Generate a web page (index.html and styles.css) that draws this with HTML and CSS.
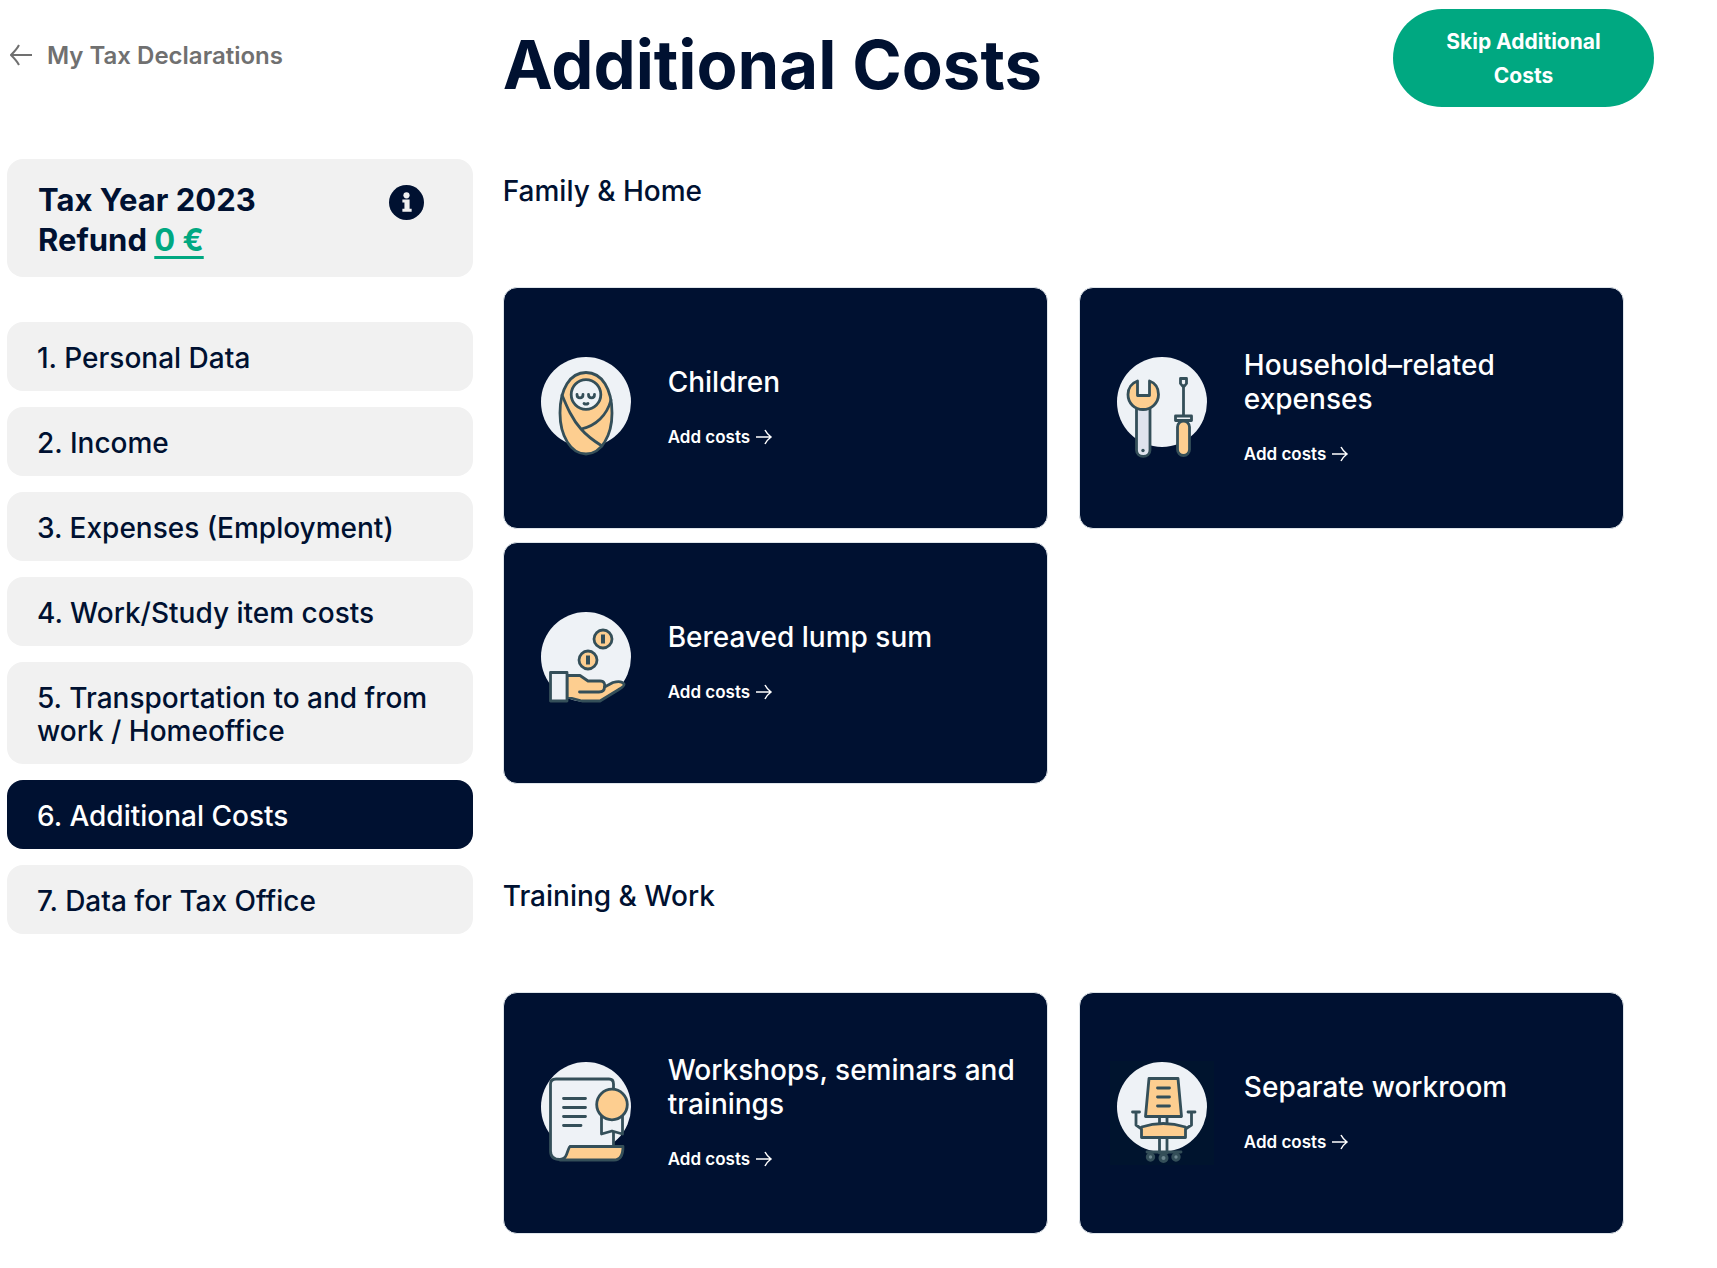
FILE: index.html
```html
<!DOCTYPE html>
<html lang="en">

<head>
    <meta charset="UTF-8">
    <meta name="viewport" content="width=device-width, initial-scale=1.0">
    <title>Additional Costs</title>
    <link rel="stylesheet" href="styles.css">
</head>

<body>
    <div class="page">
        <!-- Sidebar -->
        <aside class="sidebar">
            <a class="back-link" href="#">
                <svg class="back-arrow" viewBox="0 0 22 22" aria-hidden="true">
                    <path d="M22 11H1M9 1C7 5 4 8 1 11C4 14 7 17 9 21" />
                </svg>
                My Tax Declarations
            </a>
            <div class="refund-box">
                <p class="refund-text">Tax Year 2023<br>Refund <a class="refund-amount" href="#">0 €</a></p>
                <button class="info-button" type="button" aria-label="Refund information">
                    <svg viewBox="0 0 34 34" aria-hidden="true">
                        <circle cx="17" cy="17" r="17" fill="#001131" />
                        <circle cx="17" cy="10" r="3" fill="#f1f1f1" />
                        <path d="M13 14h7v9h2v3h-9v-3h2v-6h-2z" fill="#f1f1f1" />
                    </svg>
                </button>
            </div>
            <nav class="steps">
                <a class="step" href="#">1. Personal Data</a>
                <a class="step" href="#">2. Income</a>
                <a class="step" href="#">3. Expenses (Employment)</a>
                <a class="step" href="#">4. Work/Study item costs</a>
                <a class="step" href="#">5. Transportation to and from work / Homeoffice</a>
                <a class="step active" href="#">6. Additional Costs</a>
                <a class="step" href="#">7. Data for Tax Office</a>
            </nav>
        </aside>

        <!-- Content -->
        <main class="content">
            <header class="content-header">
                <h1>Additional Costs</h1>
                <button class="skip-button" type="button">Skip Additional Costs</button>
            </header>

            <section class="category">
                <h2>Family &amp; Home</h2>
                <div class="cards">
                    <a class="card" href="#">
                        <svg class="card-icon" viewBox="0 0 104 104" aria-hidden="true">
                            <circle class="disc" cx="52" cy="46" r="45" />
                            <path class="line peach" d="M52 16.500C68 16.500 78 33 78 57C78 80 67 98 52 98S26 80 26 57C26 33 36 16.500 52 16.500Z" />
                            <circle class="line pale" cx="52" cy="38.500" r="14.800" />
                            <path class="line" d="M28 39C33 51 38 63 47 73C53 80 60 85 68 90M77 44C73 59 62 70 47 73" />
                            <path class="line" d="M43 38.500C43 43 49 43 49 38.500M54.500 38.500C54.500 43 60.500 43 60.500 38.500M50 47.500Q52 48.800 54 47.500" />
                        </svg>
                        <div class="card-body">
                            <h3>Children</h3>
                            <span class="add-costs">Add costs
                                <svg class="arrow" viewBox="0 0 16 16" aria-hidden="true"><path d="M0 8H15M9 1Q11 5 15 8Q11 11 9 15" /></svg>
                            </span>
                        </div>
                    </a>
                    <a class="card" href="#">
                        <svg class="card-icon" viewBox="0 0 104 104" aria-hidden="true">
                            <circle class="disc" cx="52" cy="46" r="45" />
                            <!-- wrench -->
                            <path class="line metal" d="M26.500 52H40V94C40 102.500 26.500 102.500 26.500 94Z" />
                            <path class="line peach" d="M27.500 25V39.500H39.500V25C45 27 48.500 32 48.500 38.500C48.500 47 41.500 53.500 33 53.500S18 47 18 38.500C18 32 22 27 27.500 25Z" />
                            <circle class="dark" cx="33" cy="94.500" r="1.700" />
                            <!-- screwdriver -->
                            <path class="line pale" d="M70.500 22.500H76.500V27.500L74.500 30H72.500L70.500 27.500Z" />
                            <path class="line" d="M73.500 30V60" />
                            <rect class="line peach" x="67.500" y="65" width="12" height="34.500" rx="6" />
                            <rect class="line pale" x="65.500" y="60" width="16" height="4.500" />
                        </svg>
                        <div class="card-body">
                            <h3>Household–related expenses</h3>
                            <span class="add-costs">Add costs
                                <svg class="arrow" viewBox="0 0 16 16" aria-hidden="true"><path d="M0 8H15M9 1Q11 5 15 8Q11 11 9 15" /></svg>
                            </span>
                        </div>
                    </a>
                    <a class="card" href="#">
                        <svg class="card-icon" viewBox="0 0 104 104" aria-hidden="true">
                            <circle class="disc" cx="52" cy="46" r="45" />
                            <circle class="line peach" cx="69" cy="28" r="9" />
                            <path class="bar" d="M69 23.500V32.500" />
                            <circle class="line peach" cx="54" cy="49" r="9" />
                            <path class="bar" d="M54 44.500V53.500" />
                            <path class="line peach" d="M33 64.500H46L54 70H66C71 70 71 74 70.500 76L79 71.500C84 70 88 70 90 73C91 75 87 77 84 79L66 90H48L33 86Z" />
                            <path class="line" d="M45.500 81H65C69 81 70.500 79 70.500 76" />
                            <rect class="line pale" x="16.500" y="61.500" width="16.500" height="28.500" />
                        </svg>
                        <div class="card-body">
                            <h3>Bereaved lump sum</h3>
                            <span class="add-costs">Add costs
                                <svg class="arrow" viewBox="0 0 16 16" aria-hidden="true"><path d="M0 8H15M9 1Q11 5 15 8Q11 11 9 15" /></svg>
                            </span>
                        </div>
                    </a>
                </div>
            </section>

            <section class="category">
                <h2>Training &amp; Work</h2>
                <div class="cards">
                    <a class="card" href="#">
                        <svg class="card-icon" viewBox="0 0 104 104" aria-hidden="true">
                            <circle class="disc" cx="52" cy="46" r="45" />
                            <path class="line pale" d="M22 18H75Q79.500 18 79.500 23V86H36C34 90 35 98 26 98.500Q16.500 98.500 16.500 90V23Q16.500 18 22 18Z" />
                            <path class="line peach" d="M36 85.500H89Q89 99 80 99H26C34 98 33 88 36 85.500Z" />
                            <path class="line" d="M29.500 37.500H51.500M29.500 46.500H51.500M29.500 55.500H51.500M29.500 64.500H47" />
                            <path class="line pale" d="M67.500 50V73L78 70L88.500 73V50Z" />
                            <circle class="line peach" cx="78" cy="43.500" r="15.300" />
                        </svg>
                        <div class="card-body">
                            <h3>Workshops, seminars and trainings</h3>
                            <span class="add-costs">Add costs
                                <svg class="arrow" viewBox="0 0 16 16" aria-hidden="true"><path d="M0 8H15M9 1Q11 5 15 8Q11 11 9 15" /></svg>
                            </span>
                        </div>
                    </a>
                    <a class="card" href="#">
                        <svg class="card-icon" viewBox="0 0 104 104" aria-hidden="true">
                            <rect class="shade" width="104" height="104" />
                            <circle class="disc" cx="52" cy="46" r="45" />
                            <path class="line pale" d="M49.500 54H57V92H49.500Z" />
                            <path class="line peach" d="M39 17.500H68L71.500 55.500H35.500Z" />
                            <path class="line" d="M47.500 27H59.500M47.500 36H59.500M47.500 45H59.500" />
                            <path class="line" d="M22.500 51H29.500M26 51V64L33 69M78 51H85M81.500 51V64L74 69" />
                            <path class="line peach" d="M31.500 66Q53 59 75.500 66V76.500H31.500Z" />
                            <path class="line" d="M37 91H71" />
                            <circle class="wheel" cx="40.500" cy="96" r="3.200" />
                            <circle class="wheel" cx="53.500" cy="97" r="3.500" />
                            <circle class="wheel" cx="66" cy="96" r="3.200" />
                        </svg>
                        <div class="card-body">
                            <h3>Separate workroom</h3>
                            <span class="add-costs">Add costs
                                <svg class="arrow" viewBox="0 0 16 16" aria-hidden="true"><path d="M0 8H15M9 1Q11 5 15 8Q11 11 9 15" /></svg>
                            </span>
                        </div>
                    </a>
                </div>
            </section>
        </main>
    </div>
</body>

</html>
```
FILE: styles.css
```css
* {
    box-sizing: border-box;
}

body {
    font-family: Inter, "Liberation Sans", sans-serif;
    color: #001131;
    background-color: #fff;
    margin: 0;
}

h1,
h2,
h3,
p {
    margin: 0;
}

a {
    color: inherit;
    text-decoration: none;
}

button {
    font-family: inherit;
    border: none;
    cursor: pointer;
}

.page {
    display: grid;
    grid-template-columns: minmax(0, 144fr) minmax(0, 356fr);
    column-gap: 30px;
    padding: 9px 63px 32px 7px;
}

/* Sidebar */
.back-link {
    display: flex;
    align-items: center;
    gap: 15px;
    height: 92px;
    padding-left: 3px;
    color: #707070;
    font-size: 24px;
    font-weight: 600;
}

.back-arrow {
    width: 22px;
    height: 22px;
    fill: none;
    stroke: #707070;
    stroke-width: 2;
}

.refund-box {
    display: flex;
    justify-content: space-between;
    align-items: flex-start;
    margin: 58px 0 45px;
    padding: 21px 49px 17px 31px;
    background-color: #f1f1f1;
    border-radius: 16px;
}

.refund-text {
    font-size: 31px;
    font-weight: 700;
    line-height: 40px;
}

.refund-amount {
    color: #00a881;
    text-decoration: underline;
    text-decoration-thickness: 3px;
    text-underline-offset: 5px;
}

.info-button {
    width: 35px;
    height: 35px;
    margin-top: 5px;
    padding: 0;
    background: none;
}

.steps {
    display: flex;
    flex-direction: column;
    gap: 16px;
}

.step {
    padding: 20px 30px 16px;
    background-color: #f1f1f1;
    border-radius: 16px;
    font-size: 28px;
    font-weight: 500;
    line-height: 33px;
}

.step.active {
    background-color: #001131;
    color: #fff;
}

/* Content */
.content-header {
    display: flex;
    justify-content: space-between;
    align-items: center;
    height: 98px;
}

h1 {
    font-size: 67px;
    line-height: 80px;
    padding-top: 14px;
}

.skip-button {
    width: 261px;
    padding: 16px 40px 14px;
    background-color: #00a881;
    border-radius: 49px;
    color: #fff;
    font-size: 21px;
    font-weight: 700;
    line-height: 34px;
}

.category {
    padding: 67px 30px 0 0;
}

.category + .category {
    padding-top: 95px;
}

h2 {
    font-size: 28px;
    font-weight: 500;
    line-height: 34px;
    margin-bottom: 79px;
}

.cards {
    display: grid;
    grid-template-columns: 1fr 1fr;
    gap: 13px 31px;
}

.card {
    display: flex;
    align-items: center;
    gap: 30px;
    min-height: 242px;
    padding: 30px;
    background-color: #001131;
    border: 1px solid #dfe5ea;
    border-radius: 14px;
    color: #fff;
}

.card-icon {
    flex: none;
    width: 104px;
    height: 104px;
}

.card-body {
    padding-top: 2px;
}

.card h3 {
    font-size: 28px;
    font-weight: 500;
    line-height: 34px;
    margin-bottom: 22px;
}

.add-costs {
    display: flex;
    align-items: center;
    gap: 6px;
    font-size: 17px;
    font-weight: 600;
    line-height: 32px;
}

.arrow {
    width: 16px;
    height: 16px;
    fill: none;
    stroke: #fff;
    stroke-width: 1.5;
}

/* Icon parts */
.disc,
.pale {
    fill: #eef2f6;
}

.line {
    stroke: #344f59;
    stroke-width: 2.8;
    stroke-linecap: round;
    stroke-linejoin: round;
}

.line:not(.peach):not(.pale):not(.metal) {
    fill: none;
}

.peach {
    fill: #fdce90;
}

.metal {
    fill: #dfe3ed;
}

.dark {
    fill: #344f59;
}

.bar {
    stroke: #344f59;
    stroke-width: 4;
}

.shade {
    fill: #00142e;
}

.wheel {
    fill: #6d8790;
    stroke: #344f59;
    stroke-width: 3;
}
```
